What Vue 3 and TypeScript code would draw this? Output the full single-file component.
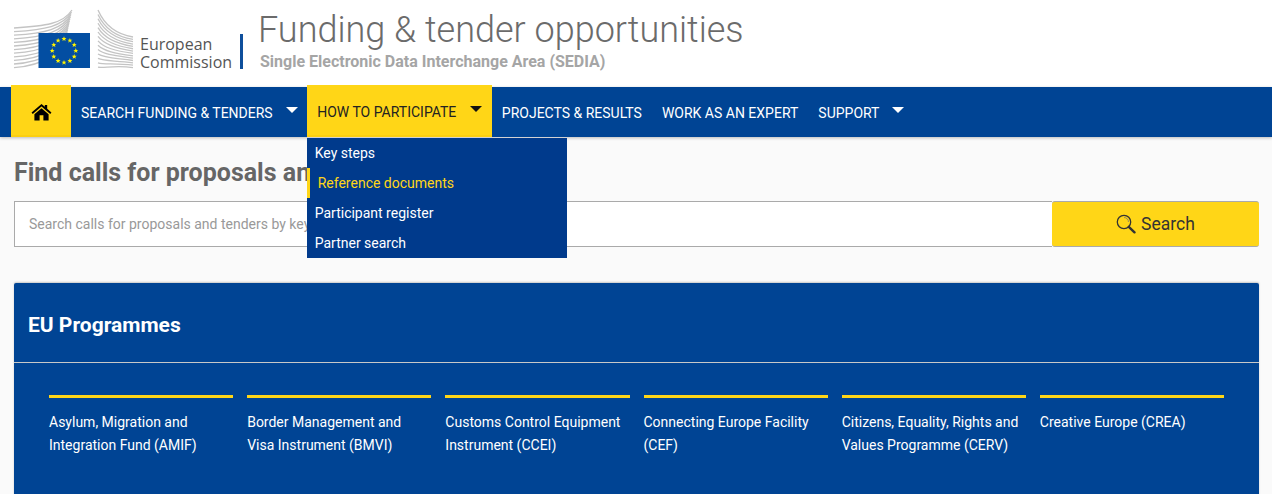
<script setup lang="ts">
const navItems = [
  { label: 'SEARCH FUNDING & TENDERS', caret: true, active: false },
  { label: 'HOW TO PARTICIPATE', caret: true, active: true },
  { label: 'PROJECTS & RESULTS', caret: false, active: false },
  { label: 'WORK AS AN EXPERT', caret: false, active: false },
  { label: 'SUPPORT', caret: true, active: false },
]
const menu = ['Key steps', 'Reference documents', 'Participant register', 'Partner search']
const programmes = [
  ['Asylum, Migration and', 'Integration Fund (AMIF)'],
  ['Border Management and', 'Visa Instrument (BMVI)'],
  ['Customs Control Equipment', 'Instrument (CCEI)'],
  ['Connecting Europe Facility', '(CEF)'],
  ['Citizens, Equality, Rights and', 'Values Programme (CERV)'],
  ['Creative Europe (CREA)'],
]
const stars = Array.from({ length: 12 }, (_, i) => {
  const a = (i * Math.PI) / 6
  return { x: 64 + 11.8 * Math.sin(a), y: 50.7 - 11.8 * Math.cos(a) }
})
const leftPaths = Array.from({ length: 12 }, (_, i) => {
  const y = 28 + i * 3.6
  return `M14 ${y} C45 ${y - 2} 63 ${24 + i * 2.5} ${72 - i * 0.5} ${10 + i * 2.2}`
})
const rightPaths = Array.from({ length: 14 }, (_, i) =>
  `M98 ${10 + i * 4.4} C104 ${24 + i * 3.4} 115 ${34 + i * 2.4} 133 ${37 + i * 2.35}`,
)
</script>

<template>
  <div class="page">
    <header class="header">
      <svg class="logo" width="140" height="70" viewBox="0 0 140 70">
        <g fill="none" stroke="#c4c4c4" stroke-width="1.300">
          <path v-for="d in leftPaths" :key="d" :d="d" />
          <path v-for="d in rightPaths" :key="d" :d="d" />
        </g>
        <rect x="38.500" y="33" width="51.500" height="35" fill="#034ea2" />
        <path v-for="(s, i) in stars" :key="i" d="M0 -2.600 L0.700 -0.800 L2.500 -0.800 L1.100 0.300 L1.600 2.200 L0 1.100 L-1.600 2.200 L-1.100 0.300 L-2.500 -0.800 L-0.700 -0.800 Z" fill="#fff200" :transform="`translate(${s.x} ${s.y})`" />
      </svg>
      <div class="wordmark"><span>European</span><span>Commission</span></div>
      <div class="rule"></div>
      <div class="titles">
        <h1>Funding &amp; tender opportunities</h1>
        <p>Single Electronic Data Interchange Area (SEDIA)</p>
      </div>
    </header>

    <nav class="nav">
      <a class="home">
        <svg width="21" height="18" viewBox="0 0 22 19"><path d="M11 1 L14.500 4 V2 H17 V6.200 L21.500 10 L20.200 11.500 L11 3.700 L1.800 11.500 L0.500 10 Z M11 5.500 L18.500 11.800 V18.500 H13 V13 H9 V18.500 H3.500 V11.800 Z" fill="#000" /></svg>
      </a>
      <div v-for="item in navItems" :key="item.label" class="nav-item" :class="{ active: item.active, 'has-caret': item.caret }">
        <span>{{ item.label }}</span>
        <i v-if="item.caret" class="caret"></i>
        <ul v-if="item.active" class="dropdown">
          <li v-for="(m, i) in menu" :key="m" :class="{ current: i === 1 }">{{ m }}</li>
        </ul>
      </div>
    </nav>

    <main class="main">
      <h2 class="find">Find calls for proposals and tenders</h2>
      <div class="search">
        <div class="input">Search calls for proposals and tenders by keyword</div>
        <button class="btn">
          <svg width="20" height="20" viewBox="0 0 20 20"><circle cx="8" cy="8" r="6.700" fill="none" stroke="#333" stroke-width="1.300" /><path d="M12.800 12.800 L18.500 18.300" stroke="#333" stroke-width="2.400" stroke-linecap="round" /><path d="M8 3.500 A4.500 4.500 0 0 1 12.500 8" fill="none" stroke="#777" stroke-width="0.800" /></svg>
          <span>Search</span>
        </button>
      </div>
      <section class="card">
        <h3>EU Programmes</h3>
        <div class="grid">
          <div v-for="p in programmes" :key="p[0]" class="prog">
            <div v-for="line in p" :key="line">{{ line }}</div>
          </div>
        </div>
      </section>
    </main>
  </div>
</template>

<style>
html, body { margin: 0; padding: 0; background: #fafafa; overflow: hidden; }
</style>

<style scoped>
* { box-sizing: border-box; }
.page { width: 1272px; height: 494px; overflow: hidden; font-family: Roboto, "Liberation Sans", sans-serif; background: #fafafa; }
.header { height: 87px; background: #fff; display: flex; align-items: flex-start; }
.logo { flex: none; }
.wordmark { margin-top: 35px; display: flex; flex-direction: column; font-size: 16px; line-height: 18px; color: #555; font-family: "Open Sans", Roboto, sans-serif; width: 100px; flex: none; }
.rule { width: 3px; height: 35px; background: #0e4f9c; margin: 34px 0 0 0; flex: none; }
.titles { margin-left: 17px; }
.titles h1 { margin: 9px 0 0 -2px; font-size: 36px; line-height: 42px; font-weight: 300; color: #6b6b6b; }
.titles p { margin: 1px 0 0; font-size: 16px; line-height: 20px; font-weight: 700; color: #a5a5a5; }
.nav { height: 50px; background: #004494; display: flex; padding-left: 11px; box-shadow: 0 1px 3px rgba(0,0,0,.25); position: relative; z-index: 2; }
.home { width: 60px; height: 52px; margin-top: -2px; padding-top: 4px; background: #ffd617; border-bottom: 2px solid #fbcf10; display: flex; align-items: center; justify-content: center; flex: none; }
.nav-item { position: relative; padding: 2px 10px 0; display: flex; align-items: center; color: #fff; font-size: 14px; white-space: nowrap; }
.nav-item.has-caret { padding-right: 9px; }
.nav-item.active { background: #ffd617; border-bottom: 2px solid #fbcf10; color: #222; margin-top: -2px; height: 52px; padding: 4px 10px 0 10.500px; }
.caret { width: 0; height: 0; border-left: 6px solid transparent; border-right: 6px solid transparent; border-top: 6px solid #fff; margin: -6px 0 0 13px; }
.active .caret { border-top-color: #111; margin-left: 13.500px; }
.dropdown { position: absolute; left: 0; top: 53px; width: 260px; height: 120px; margin: 0; padding: 0; list-style: none; background: #003a8c; color: #fff; }
.dropdown li { height: 30px; line-height: 30px; padding-left: 8px; font-size: 14px; }
.dropdown li.current { color: #ffd617; border-left: 3px solid #ffd617; }
.main { padding: 0 13px 0 14px; }
.find { margin: 0; padding-top: 21px; height: 64px; font-size: 25px; line-height: 30px; font-weight: 700; color: #666; }
.search { display: flex; height: 46px; }
.input { flex: 1; background: #fff; border: 1px solid #aaa; border-right: 0; padding-left: 14px; line-height: 44px; font-size: 14px; color: #999; }
.btn { width: 207px; border: 0; border-bottom: 1px solid #aaa; border-top: 1px solid #aaa; border-radius: 3px; background: #ffd617; display: flex; align-items: center; justify-content: center; gap: 5px; font: 400 17.500px Roboto, sans-serif; color: #333; padding: 0; }
.card { margin-top: 36px; background: #004494; border-radius: 2px; color: #fff; height: 300px; box-shadow: 0 -1px 2px rgba(0,0,0,.2); }
.card h3 { margin: 0; height: 80px; padding-left: 14px; line-height: 85px; font-size: 21px; font-weight: 700; border-bottom: 1px solid #c8c8c8; }
.grid { display: grid; grid-template-columns: repeat(6, 1fr); column-gap: 14px; padding: 32px 35px 0; }
.prog { border-top: 3px solid #ffd617; padding-top: 13px; font-size: 14px; line-height: 23px; }
</style>
